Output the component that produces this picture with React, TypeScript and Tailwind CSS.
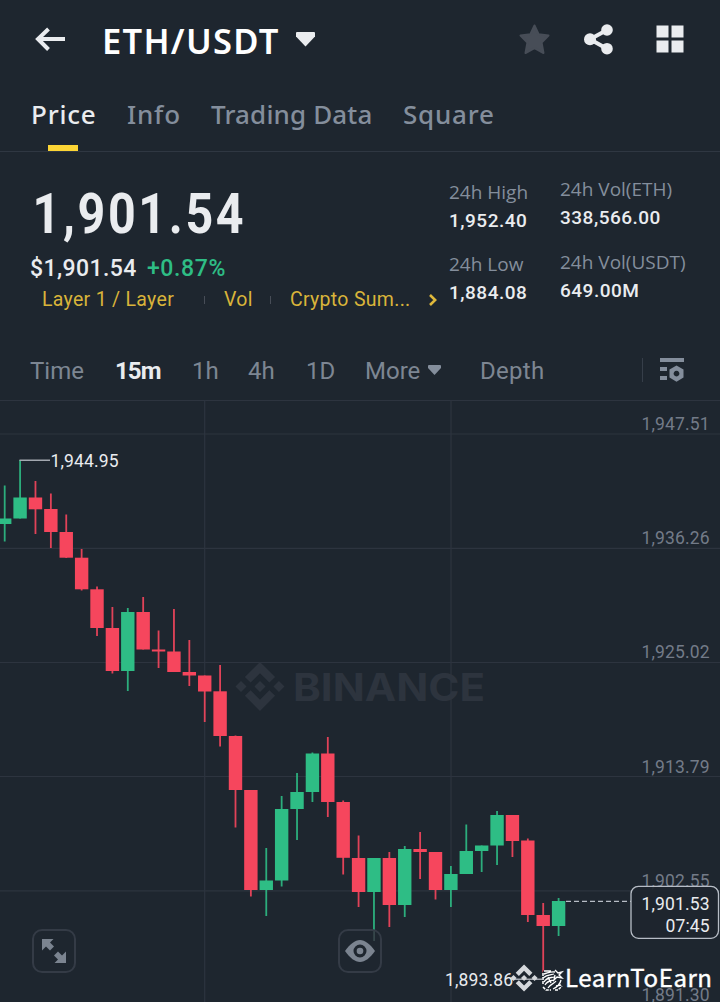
import { clsx } from 'clsx';

interface Candle {
  up: boolean;
  high: number;
  top: number;
  bottom: number;
  low: number;
}

const GREEN = '#2ebd85';
const RED = '#f6465d';
const STEP = 15.386;
const FIRST_X = 4.7;

// [direction, high, body top, body bottom, low]
const RAW: [0 | 1, number, number, number, number][] = [
  [1, 485.5, 518.5, 524, 541.5],
  [1, 460, 497.5, 518.5, 518.5],
  [0, 481, 497.5, 509.3, 534],
  [0, 493.5, 509, 532, 548],
  [0, 514.5, 532, 557.7, 558],
  [0, 549, 557.7, 589.3, 590.5],
  [0, 586.5, 589.3, 628, 636],
  [0, 607, 628, 671, 673.5],
  [1, 608, 612, 671, 691],
  [0, 597, 612, 649.5, 649.5],
  [0, 630.5, 649.5, 651.5, 668],
  [0, 609, 651.5, 672, 672],
  [0, 640, 672, 675.5, 686],
  [0, 675.5, 675.5, 691.5, 722],
  [0, 665, 691.3, 736, 746.5],
  [0, 735.5, 736, 790, 827.5],
  [0, 790, 790, 890, 896.5],
  [1, 848, 880.5, 890, 916],
  [1, 796, 809, 880.5, 886.5],
  [1, 773, 792, 809, 840],
  [1, 752.5, 753.5, 792, 802],
  [0, 737, 753.5, 802, 817],
  [0, 800.5, 802, 857.8, 874.5],
  [0, 835.5, 858, 892, 907],
  [1, 858, 858, 892, 930],
  [0, 852, 858, 905, 927],
  [1, 846, 849, 905, 917],
  [0, 832, 849, 852, 879],
  [0, 852, 852, 890, 899.5],
  [1, 866, 874, 890, 907],
  [1, 824.5, 851, 874, 874],
  [1, 845.5, 845.5, 851, 872],
  [1, 811, 815, 845.5, 865],
  [0, 815, 815, 841, 857],
  [0, 838.5, 840.5, 915, 922],
  [0, 903, 915, 926, 978],
  [1, 898, 901, 926, 936],
];

const candles: Candle[] = RAW.map(([dir, high, top, bottom, low]) => ({
  up: dir === 1,
  high,
  top,
  bottom,
  low,
}));

const axis = [
  { label: '1,947.51', y: 430 },
  { label: '1,936.26', y: 544 },
  { label: '1,925.02', y: 658 },
  { label: '1,913.79', y: 773 },
  { label: '1,902.55', y: 887 },
  { label: '1,891.30', y: 1001 },
];

function BinanceMark() {
  return (
    <>
      <path d="M12 0 19.4 7.4 16.6 10.1 12 5.5 7.4 10.1 4.6 7.4Z" />
      <path d="M12 24 19.4 16.6 16.6 13.9 12 18.5 7.4 13.9 4.6 16.6Z" />
      <path d="M2.7 9.3 5.4 12 2.7 14.7 0 12Z" />
      <path d="M21.3 9.3 24 12 21.3 14.7 18.6 12Z" />
      <path d="M12 9.3 14.7 12 12 14.7 9.3 12Z" />
    </>
  );
}

function Header() {
  return (
    <header className="flex h-[78px] items-center">
      <svg className="ml-[35px] h-6 w-[30px]" viewBox="0 0 30 24" fill="none" stroke="#eaecef" strokeWidth="4">
        <path d="M30 12H3M13.5 2 3 12 13.5 22.5" />
      </svg>
      <h1 className="ml-[37px] w-[178px] whitespace-nowrap pt-[3px] font-['Noto_Sans',sans-serif] text-[34.500px] leading-[46px] font-semibold tracking-[1.300px] text-white">
        ETH/USDT
      </h1>
      <svg className="ml-4 h-[15px] w-[19px]" viewBox="0 0 19 15" fill="#eaecef">
        <path d="M1 0h17q1 0 1 1v3.5L9.5 14.5 0 4.500V1q0-1 1-1Z" />
      </svg>
      <svg className="ml-[204px] h-[31px] w-[31px]" viewBox="0 0 31 31" fill="#474d57" stroke="#474d57" strokeWidth="2" strokeLinejoin="round">
        <path d="M15.500 1.500 19.600 10.200 29.500 11.500 22.600 18.600 24.500 29 15.500 24.200 6.500 29 8.400 18.600 1.500 11.500 11.400 10.200Z" />
      </svg>
      <svg className="ml-[34px] h-[31px] w-[29px]" viewBox="0 0 29 31" fill="#eaecef">
        <path d="M23 6 6 15.200 23 24.700" fill="none" stroke="#eaecef" strokeWidth="4" />
        <circle cx="23" cy="6" r="5.800" />
        <circle cx="6" cy="15.200" r="6" />
        <circle cx="23" cy="24.700" r="5.800" />
      </svg>
      <svg className="ml-[43px] h-7 w-7" viewBox="0 0 28 28" fill="#eaecef">
        <rect x="0.500" y="0.500" width="12" height="12" />
        <rect x="15.500" y="0.500" width="12" height="12" />
        <rect x="0.500" y="15.500" width="12" height="12" />
        <rect x="15.500" y="15.500" width="12" height="12" />
      </svg>
    </header>
  );
}

function Tabs() {
  return (
    <nav className="flex h-[74px] border-b border-[#2f3742] pl-[31px] font-['Noto_Sans',sans-serif] text-[26px] leading-[73px] font-medium whitespace-nowrap text-[#848e9c]">
      <div className="relative w-[96px] tracking-[0.800px] text-[#eaecef]">
        Price
        <span className="absolute bottom-0 left-[17px] h-1.5 w-[30px] bg-[#fcd535]" />
      </div>
      <div className="w-[84px] tracking-[0.800px]">Info</div>
      <div className="w-[192px] tracking-[0.150px]">Trading Data</div>
      <div className="tracking-[0.800px]">Square</div>
    </nav>
  );
}

function Stat({ label, value }: { label: string; value: string }) {
  return (
    <div className="h-[72.500px] whitespace-nowrap">
      <div className="font-['Open_Sans',sans-serif] text-[19px] leading-7 text-[#848e9c]">{label}</div>
      <div className="pt-px font-[Roboto,sans-serif] text-[19px] leading-7 font-medium tracking-[0.5px] text-[#eaecef]">
        {value}
      </div>
    </div>
  );
}

function Summary() {
  return (
    <section className="flex h-[188px] font-[Roboto,sans-serif] whitespace-nowrap">
      <div className="w-[449px] pt-[30px]">
        <div className="origin-left scale-x-[0.880] pl-[37px] text-[55px] leading-[64px] font-bold tracking-[3px] text-[#eaecef]">
          1,901.54
        </div>
        <div className="flex pl-[30px] text-[23px] leading-[46px] font-medium tracking-[0.400px]">
          <span className="w-[117px] text-[#eaecef]">$1,901.54</span>
          <span className="tracking-[0.600px] text-[#2ebd85]">+0.87%</span>
        </div>
        <div className="-mt-[5px] flex items-center pl-[42px] text-[19.500px] leading-[26px] tracking-[0.300px] text-[#d9b43a]">
          <span className="w-[162px]">Layer 1 / Layer</span>
          <span className="h-2 w-px bg-[#474d57]" />
          <span className="ml-[19px] w-[46px]">Vol</span>
          <span className="h-2 w-px bg-[#474d57]" />
          <span className="ml-[19px] w-[139px]">Crypto Sum...</span>
          <svg className="h-3 w-2" viewBox="0 0 8 12" fill="none" stroke="#e0b93b" strokeWidth="2.600">
            <path d="M1 1 6.200 6 1 11" />
          </svg>
        </div>
      </div>
      <div className="w-[111px] pt-[25.500px]">
        <Stat label="24h High" value="1,952.40" />
        <Stat label="24h Low" value="1,884.08" />
      </div>
      <div className="pt-[23px]">
        <Stat label="24h Vol(ETH)" value="338,566.00" />
        <Stat label="24h Vol(USDT)" value="649.00M" />
      </div>
    </section>
  );
}

const intervals = [
  { name: 'Time', width: 'w-[85px]' },
  { name: '15m', width: 'w-[77px]', active: true },
  { name: '1h', width: 'w-[56px]' },
  { name: '4h', width: 'w-[58px]' },
  { name: '1D', width: 'w-[59px]' },
];

function Intervals() {
  return (
    <div className="flex h-[60px] items-center pl-[30px] font-[Roboto,sans-serif] text-[24px] whitespace-nowrap text-[#7d8693]">
      {intervals.map((item) => (
        <span key={item.name} className={clsx('pt-0.5', item.width, item.active && 'font-bold tracking-[-0.900px] text-[#eaecef]')}>
          {item.name}
        </span>
      ))}
      <span className="w-[63px] pt-0.5">More</span>
      <svg className="h-[10px] w-[13px]" viewBox="0 0 13 10" fill="#848e9c">
        <path d="M1 0h11q1 0 1 1v2L6.500 10 0 3V1q0-1 1-1Z" />
      </svg>
      <span className="ml-[39px] w-[162px] pt-0.5 tracking-[0.300px]">Depth</span>
      <span className="h-6 w-px bg-[#363e49]" />
      <svg className="ml-[17px] h-6 w-6" viewBox="0 0 24 24" fill="#848e9c">
        <path d="M0 0h24v4H0ZM0 9h7v4H0ZM0 18h7v4H0Z" />
        <path fillRule="evenodd" d="M16.500 7.500 23.500 11.500V19.500L16.500 23.700 9.500 19.500V11.500ZM16.500 12.700a2.900 2.900 0 1 0 .01 0Z" />
      </svg>
    </div>
  );
}

function Chart() {
  return (
    <section className="relative h-[602px]">
      <svg className="block h-[602px] w-[720px] font-[Roboto,sans-serif]" viewBox="0 400 720 602">
        {/* Grid */}
        <g stroke="#2d343f" strokeWidth="1.200">
          <path d="M0 400.500H720M0 434H720M0 548.300H720M0 662.500H720M0 776.500H720M0 890.800H720" />
          <path d="M204.700 400V1002M451 400V1002" />
        </g>

        {/* Watermark */}
        <g fill="#2d343e">
          <g transform="translate(235.500 662) scale(2.040)">
            <BinanceMark />
          </g>
          <text
            x="293"
            y="700.500"
            fontSize="38"
            fontWeight="700"
            textLength="192"
            lengthAdjust="spacingAndGlyphs"
            className="font-[Inter,sans-serif]"
          >
            BINANCE
          </text>
        </g>

        {/* Price axis */}
        <g fill="#737b88" fontSize="17.500">
          {axis.map((tick) => (
            <text key={tick.label} x="641.500" y={tick.y} textLength="68">
              {tick.label}
            </text>
          ))}
        </g>

        {/* Candles */}
        {candles.map((c, i) => {
          const x = FIRST_X + i * STEP;
          const color = c.up ? GREEN : RED;
          return (
            <g key={i} fill={color}>
              <rect x={x - 0.9} y={c.high} width="1.800" height={c.low - c.high} opacity="0.900" />
              <rect x={x - 6.7} y={c.top} width="13.400" height={c.bottom - c.top} />
            </g>
          );
        })}
        <path d="M374.100 930V941" stroke="#3b4d50" strokeWidth="1.500" />

        {/* High and low callouts */}
        <path d="M19.500 460.200H50M512 979.300H543" stroke="#a3a8b0" strokeWidth="1.500" />
        <g fill="#eaecef" fontSize="17.500">
          <text x="50.500" y="467" textLength="68">1,944.95</text>
          <text x="445" y="986" textLength="68">1,893.86</text>
        </g>

        {/* Last price */}
        <path d="M566 901.300H631" stroke="#b7bdc6" strokeWidth="1.300" strokeDasharray="5 3" />
        <rect x="631" y="886.300" width="87.500" height="52" rx="7.500" fill="#1e262f" fillOpacity="0.900" stroke="#b7bdc6" strokeWidth="1.300" />
        <g fill="#eaecef" fontSize="17.500">
          <text x="641.500" y="910" textLength="68">1,901.53</text>
          <text x="665.500" y="932" textLength="44">07:45</text>
        </g>

        {/* Author stamp */}
        <g transform="translate(510.500 964.500) scale(1.130)" fill="#d5d8dc">
          <BinanceMark />
        </g>
        <g transform="translate(542 969)">
          <path d="M2 1H20V17L16 21H4L0 17V4Z" fill="#1e262f" />
          <path
            d="M2 2H9M2 5C6 4 9 2 13 3M1 9C5 5 9 6 12 5M2 13C5 8 9 9 12 8M3 16C6 11 9 12 12 11M6 19C8 15 12 15 14 12M11 20C15 18 18 16 19 11M14 17L19 16M13 1L16 4L20 3L17 6L20 9L15 8L12 11L13 6M6 8L9 14"
            fill="none"
            stroke="#fff"
            strokeWidth="1.300"
          />
          <path d="M1 4V16M1 18 4 21H9M13 21H16L20 17" fill="none" stroke="#fff" strokeWidth="1.500" strokeDasharray="3 1" />
        </g>
        <text
          x="565"
          y="987"
          fontSize="24"
          fill="#fff"
          stroke="#fff"
          strokeWidth="0.400"
          textLength="147"
          className="font-['Noto_Sans_CJK_SC',sans-serif]"
        >
          LearnToEarn
        </text>
      </svg>

      <button className="absolute top-[529px] left-8 flex h-11 w-11 items-center justify-center rounded-[10px] border-2 border-[#343b46]">
        <svg className="h-6 w-6" viewBox="0 0 24 24" fill="#7b8490">
          <path d="M0 0H11.500L8 3.500 12 7.500 8 11.500 4 7.500 0 11.500Z" />
          <path d="M24 24H12.500L16 20.500 12 16.500 16 12.500 20 16.500 24 12.500Z" />
        </svg>
      </button>
      <button className="absolute top-[529px] left-[338px] flex h-11 w-11 items-center justify-center rounded-[10px] border-2 border-[#343b46]">
        <svg className="h-[22px] w-[30px] shrink-0" viewBox="0 0 30 22" fill="#7b8490">
          <path fillRule="evenodd" d="M0 11C5 4 10 0 15 0S25 4 30 11C25 18 20 22 15 22S5 18 0 11ZM15 4.500A6.500 6.500 0 1 0 15 17.500A6.500 6.500 0 1 0 15 4.500Z" />
          <circle cx="15" cy="11" r="3.300" />
        </svg>
      </button>
    </section>
  );
}

export default function App() {
  return (
    <main className="h-[1002px] w-[720px] overflow-hidden bg-[#1e262f]">
      <Header />
      <Tabs />
      <Summary />
      <Intervals />
      <Chart />
    </main>
  );
}
